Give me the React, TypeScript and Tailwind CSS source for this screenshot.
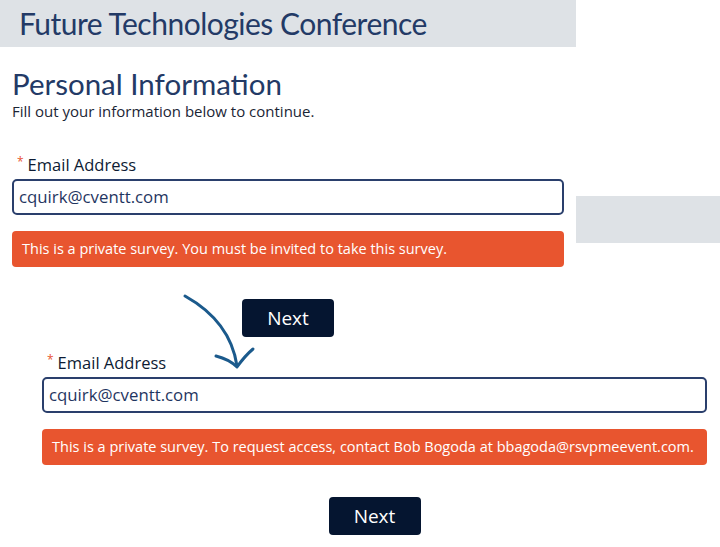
import React from 'react'

function EmailField({ message }: { message: string }) {
  return (
    <div className="flex flex-col">
      <label className="flex items-start text-[16.5px] text-[#0d1b33] leading-[20px] pl-[5px]">
        <span className="text-[#e8552f] text-[12px] leading-[14px] mr-[4px]">*</span>
        Email Address
      </label>
      <div className="mt-[4px] h-[36px] border-2 border-[#2a3f6c] rounded-[5px] flex items-center px-[5px] text-[16.8px] text-[#1f3561]">
        cquirk@cventt.com
      </div>
      <div className="mt-[16px] h-[36px] bg-[#e8552f] rounded-[4px] flex items-center px-[10px] text-[14.5px] text-white whitespace-nowrap">
        {message}
      </div>
    </div>
  )
}

function NextButton() {
  return (
    <div className="flex justify-center">
      <button className="w-[92px] h-[38px] bg-[#051530] rounded-[4px] text-white text-[19px]">
        Next
      </button>
    </div>
  )
}

function App() {
  return (
    <div className="relative w-[720px] h-[547px] bg-white overflow-hidden" style={{ fontFamily: '"Open Sans", sans-serif' }}>

      <div className="w-[576px] h-[47px] bg-[#dee2e6] flex items-center pl-[19px]">
        <h1 className="text-[30px] text-[#233a66] tracking-[-0.5px]" style={{ fontFamily: 'Lato, sans-serif' }}>
          Future Technologies Conference
        </h1>
      </div>

      <div className="pl-[12px] pt-[19px]">
        <h2 className="text-[29.5px] leading-[36px] text-[#233a66]" style={{ fontFamily: 'Lato, sans-serif' }}>
          Personal Information
        </h2>
        <p className="text-[15px] leading-[18px] text-[#1b2535]">Fill out your information below to continue.</p>
      </div>

      <div className="flex mt-[35px]">
        <div className="w-[552px] ml-[12px] flex flex-col">
          <EmailField message="This is a private survey. You must be invited to take this survey." />
          <div className="mt-[32px]">
            <NextButton />
          </div>
        </div>
        <div className="ml-[12px] mt-[41px] w-[144px] h-[47px] bg-[#dee2e6]" />
      </div>

      <div className="ml-[42px] w-[665px] mt-[16px] flex flex-col">
        <EmailField message="This is a private survey. To request access, contact Bob Bogoda at bbagoda@rsvpmeevent.com." />
        <div className="mt-[32px]">
          <NextButton />
        </div>
      </div>

      <svg className="absolute left-[180px] top-[292px]" width="80" height="80" viewBox="0 0 80 80" fill="none">
        <path d="M5 4 C 30 18, 52 40, 57 74" stroke="#1b5a8c" strokeWidth="3" strokeLinecap="round" />
        <path d="M36 64 C 44 66, 52 70, 57 75 C 62 68, 67 62, 73 57" stroke="#1b5a8c" strokeWidth="3" strokeLinecap="round" strokeLinejoin="round" />
      </svg>
    </div>
  )
}

export default App
